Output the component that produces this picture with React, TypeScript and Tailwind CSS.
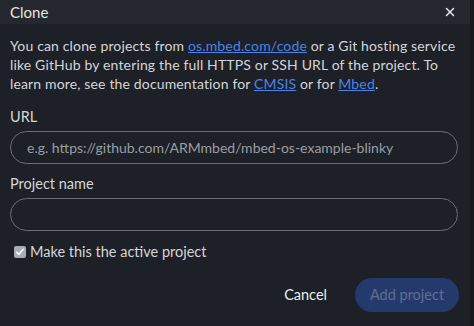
import { X } from 'lucide-react';

export default function App() {
  return (
    <div className="flex h-[326px] w-[474px] bg-[#16181c] text-[#d7d9dc]" style={{ fontFamily: 'Lato, "Noto Sans", sans-serif' }}>
      <div className="flex w-[470px] flex-col bg-[#1d2026]">
        {/* Header */}
        <div className="flex h-[24px] items-center justify-between bg-[#25282e] pl-[10px] pr-[13px]">
          <span className="text-[15px] text-[#e4e6e8]">Clone</span>
          <X className="h-[14px] w-[14px] text-[#e4e6e8]" strokeWidth={2.5} />
        </div>

        {/* Body */}
        <div className="flex flex-1 flex-col px-[10px] pt-[12px]">
          <p className="text-[14px] leading-[19px] tracking-[0.15px] text-[#d4d6d9]">
            You can clone projects from{' '}
            <a className="text-[#4c83e8] underline">os.mbed.com/code</a> or a Git hosting service
            like GitHub by entering the full HTTPS or SSH URL of the project. To
            learn more, see the documentation for{' '}
            <a className="text-[#4c83e8] underline">CMSIS</a> or for{' '}
            <a className="text-[#4c83e8] underline">Mbed</a>.
          </p>

          <label className="mt-[14px] text-[14.5px] leading-[19px] text-[#d4d6d9]">URL</label>
          <div className="mt-[5px] flex h-[33px] w-[448px] items-center rounded-full border border-[#6a6e75] px-[16px]">
            <span className="text-[14px] text-[#9a9ea5]">e.g. https://github.com/ARMmbed/mbed-os-example-blinky</span>
          </div>

          <label className="mt-[10px] text-[14.5px] leading-[19px] text-[#d4d6d9]">Project name</label>
          <div className="mt-[5px] h-[33px] w-[448px] rounded-full border border-[#6a6e75]" />

          <div className="mt-[11px] flex items-center gap-[4px] pl-[4px]">
            <span className="flex h-[12px] w-[12px] items-center justify-center rounded-[2px] bg-[#a9acb0]">
              <svg viewBox="0 0 12 12" className="h-[10px] w-[10px]">
                <path d="M2.2 6.3 L4.8 8.8 L9.8 2.8" fill="none" stroke="#ffffff" strokeWidth={2} strokeLinecap="round" strokeLinejoin="round" />
              </svg>
            </span>
            <span className="text-[14.5px] leading-[19px] text-[#d4d6d9]">Make this the active project</span>
          </div>

          <div className="mt-[17px] flex items-center justify-end gap-[28px] pr-[1px]">
            <span className="text-[14.5px] text-[#eceef0]">Cancel</span>
            <div className="flex h-[34px] w-[104px] items-center justify-center rounded-full bg-[#253a6c]">
              <span className="text-[14.5px] text-[#5f6f93]">Add project</span>
            </div>
          </div>
        </div>
      </div>
    </div>
  );
}
